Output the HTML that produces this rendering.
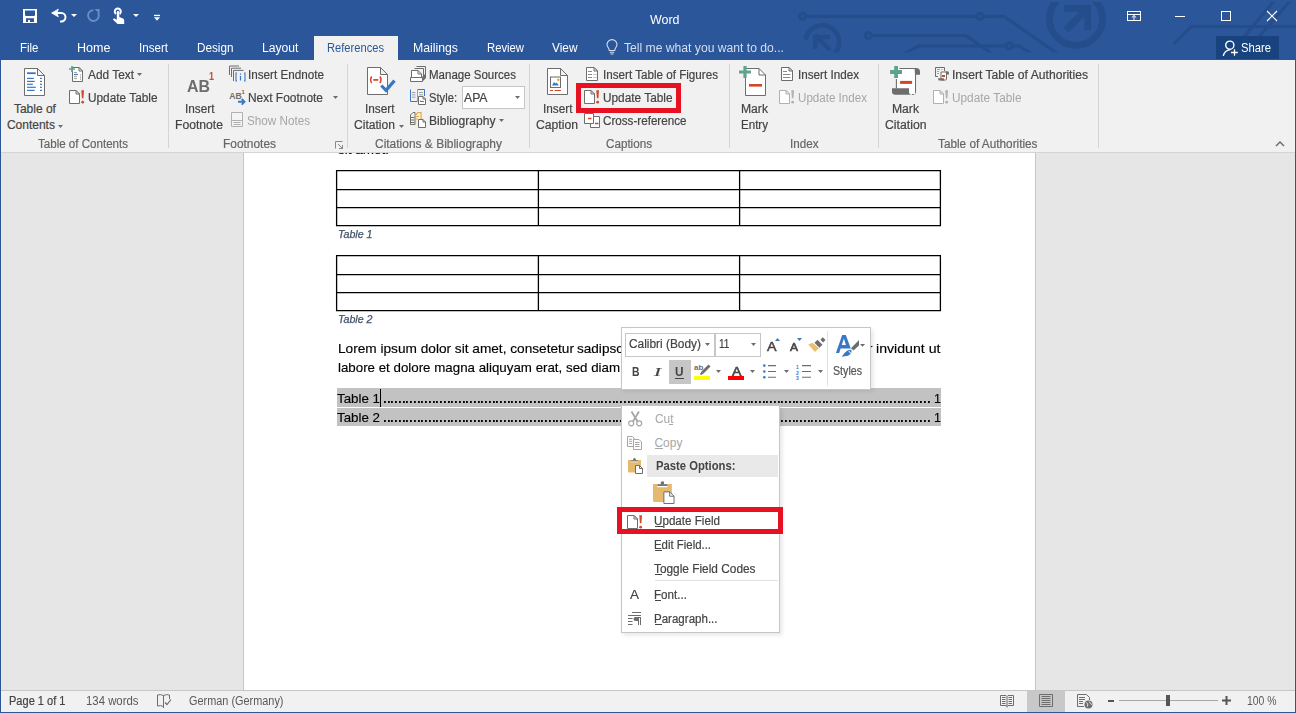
<!DOCTYPE html>
<html><head><meta charset="utf-8">
<style>
*{box-sizing:border-box;margin:0;padding:0}
html,body{width:1296px;height:713px;overflow:hidden}
body{background:#2B579A;position:relative;font-family:"Liberation Sans",sans-serif}
.t{position:absolute;white-space:pre;line-height:1;transform-origin:0 0}
svg{overflow:visible}
</style></head><body>
<svg style="position:absolute;left:0px;top:0px;clip-path:inset(2px 0 7.5px 0)" width="1296" height="60" viewBox="0 0 1296 60">
<g fill="none" stroke="#244D8C" stroke-width="3.2">
<path d="M806 16.3 H976.5 M983.7 16.3 H1004 L1058 54"/>
<circle cx="802.6" cy="16.3" r="3"/>
<circle cx="980.1" cy="16.3" r="3"/>
<path d="M872 35.6 H966 L994 55"/>
<circle cx="868.4" cy="35.6" r="3"/>
<path d="M902 55 L919 45.9 H1005.5 M1012.7 45.9 H1019 L1034 55"/>
<circle cx="1009.1" cy="45.9" r="3"/>
<path d="M1174 44 L1191 26.7 H1296"/>
<path d="M1243 38 L1274 1 M1258 38 L1290 1"/>
</g>
<path d="M805.5 39.5 A16.9 16.9 0 1 1 831 56.6" fill="none" stroke="#244D8C" stroke-width="4.8"/>
<path d="M813 37 H830 M815.2 37 V49 M815 35 L830 50" fill="none" stroke="#244D8C" stroke-width="4.4"/>
<circle cx="1076" cy="18.8" r="26.6" fill="none" stroke="#244D8C" stroke-width="6.8"/>
<path d="M1064 8.4 H1087.6 V30 M1087.6 8.4 L1066 30" fill="none" stroke="#244D8C" stroke-width="6.7"/>
</svg>
<svg style="position:absolute;left:23px;top:9px;" width="14" height="14" viewBox="0 0 14 14"><path fill="#fff" fill-rule="evenodd" d="M0 0H14V14H0Z M2 1.5H12V6.2L11.2 7H2.8L2 6.2Z M3 9.3H11V13H7V11H5V13H3Z"/></svg>
<svg style="position:absolute;left:51px;top:8px;" width="17" height="15" viewBox="0 0 17 15"><path d="M0.6 5 L7.3 1.2 L6 5 L7.3 8.8 Z" fill="#fff" stroke="#fff" stroke-width="0.8" stroke-linejoin="round"/><path d="M5 5 H10.3 A4.2 4.2 0 0 1 10.3 13.4 H9" fill="none" stroke="#fff" stroke-width="2"/></svg>
<svg style="position:absolute;left:71px;top:14px;" width="7" height="4" viewBox="0 0 7 4"><path d="M0 0H6L3 3Z" fill="#fff"/></svg>
<svg style="position:absolute;left:86px;top:8px;" width="15" height="15" viewBox="0 0 15 15"><path d="M7.4 2.1 A5.4 5.4 0 1 0 12.1 4.8" fill="none" stroke="#6A8BC3" stroke-width="1.9"/><path d="M8.6 1 H13.6 V6 Z" fill="#6A8BC3"/></svg>
<svg style="position:absolute;left:112px;top:7px;" width="14" height="18" viewBox="0 0 14 18"><path d="M3.87 6.9 A3 3 0 1 1 7.73 6.9" fill="none" stroke="#fff" stroke-width="2"/><path d="M4.8 5 Q4.8 4 6 4 Q7.3 4 7.3 5 V10.1 L11 11.5 Q12.2 12 12.2 13.5 V17 H5.5 L0.9 12.5 L2 11.3 L4.8 12.8 Z" fill="#fff"/></svg>
<svg style="position:absolute;left:133px;top:14px;" width="6" height="4" viewBox="0 0 6 4"><path d="M0 0H6L3 3Z" fill="#fff"/></svg>
<svg style="position:absolute;left:154px;top:14px;" width="6" height="8" viewBox="0 0 6 8"><rect x="0" y="0.8" width="6" height="1.3" fill="#fff"/><path d="M0 3.3H6L3 6.8Z" fill="#fff"/></svg>
<div id="t0" class="t" style="left:650.20px;top:14.00px;font-size:12px;color:#FFFFFF;font-family:'Liberation Sans',sans-serif;transform:scaleX(1.0368);">Word</div>
<svg style="position:absolute;left:1126px;top:10px;" width="16" height="12" viewBox="0 0 16 12"><rect x="1.5" y="1.5" width="13" height="9" fill="none" stroke="#fff" stroke-width="1"/><path d="M1.5 4.5H14.5" stroke="#fff"/><path d="M8 5.5V10 M5.8 7.6 L8 5.5 L10.2 7.6" stroke="#fff" fill="none"/></svg>
<div style="position:absolute;left:1175px;top:16px;width:10px;height:1px;background:#fff"></div>
<div style="position:absolute;left:1221px;top:11px;width:10px;height:10px;border:1px solid #fff"></div>
<svg style="position:absolute;left:1266px;top:10px;" width="12" height="12" viewBox="0 0 12 12"><path d="M1 1 L11 11 M11 1 L1 11" stroke="#fff" stroke-width="1.1"/></svg>
<div id="t1" class="t" style="left:20.20px;top:42.00px;font-size:12px;color:#FFFFFF;font-family:'Liberation Sans',sans-serif;transform:scaleX(0.9564);">File</div>
<div id="t2" class="t" style="left:76.70px;top:42.00px;font-size:12px;color:#FFFFFF;font-family:'Liberation Sans',sans-serif;transform:scaleX(1.0464);">Home</div>
<div id="t3" class="t" style="left:138.50px;top:42.00px;font-size:12px;color:#FFFFFF;font-family:'Liberation Sans',sans-serif;transform:scaleX(0.9662);">Insert</div>
<div id="t4" class="t" style="left:196.50px;top:42.00px;font-size:12px;color:#FFFFFF;font-family:'Liberation Sans',sans-serif;transform:scaleX(0.9770);">Design</div>
<div id="t5" class="t" style="left:261.50px;top:42.00px;font-size:12px;color:#FFFFFF;font-family:'Liberation Sans',sans-serif;transform:scaleX(1.0130);">Layout</div>
<div style="position:absolute;left:314px;top:36px;width:84px;height:24px;background:#F1F1F1"></div>
<div id="t6" class="t" style="left:326.70px;top:42.00px;font-size:12px;color:#2B579A;font-family:'Liberation Sans',sans-serif;transform:scaleX(0.9287);">References</div>
<div id="t7" class="t" style="left:412.50px;top:42.00px;font-size:12px;color:#FFFFFF;font-family:'Liberation Sans',sans-serif;transform:scaleX(1.0224);">Mailings</div>
<div id="t8" class="t" style="left:486.80px;top:42.00px;font-size:12px;color:#FFFFFF;font-family:'Liberation Sans',sans-serif;transform:scaleX(0.9401);">Review</div>
<div id="t9" class="t" style="left:552.40px;top:42.00px;font-size:12px;color:#FFFFFF;font-family:'Liberation Sans',sans-serif;transform:scaleX(0.9885);">View</div>
<svg style="position:absolute;left:606px;top:40px;" width="12" height="15" viewBox="0 0 12 15"><path d="M3.3 10.5 C3.3 8 1 7 1 4.6 A5 5 0 0 1 11 4.6 C11 7 8.7 8 8.7 10.5 Z" fill="none" stroke="#D5DEED" stroke-width="1.1"/><path d="M3.8 12.3H8.2 M4.5 14H7.5" stroke="#D5DEED" stroke-width="1.1"/></svg>
<div id="t10" class="t" style="left:624.00px;top:42.00px;font-size:12px;color:#D5DEED;font-family:'Liberation Sans',sans-serif;transform:scaleX(1.0121);">Tell me what you want to do...</div>
<div style="position:absolute;left:1216px;top:36px;width:63px;height:23px;background:#19437E"></div>
<svg style="position:absolute;left:1222px;top:41px;" width="17" height="17" viewBox="0 0 17 17"><circle cx="7.8" cy="4.2" r="4.1" fill="none" stroke="#fff" stroke-width="1.4"/><path d="M1.3 14.8 Q2.3 9.6 8.3 8.6" fill="none" stroke="#fff" stroke-width="1.4"/><path d="M12.5 8.3V14.8 M9 11.5H15.8" stroke="#fff" stroke-width="1.3"/></svg>
<div id="t11" class="t" style="left:1241.20px;top:42.00px;font-size:12px;color:#FFFFFF;font-family:'Liberation Sans',sans-serif;transform:scaleX(0.9366);">Share</div>
<div style="position:absolute;left:1px;top:60px;width:1294px;height:92px;background:#F1F1F1"></div>
<div style="position:absolute;left:1px;top:152px;width:1294px;height:1px;background:#D4D4D4"></div>
<div style="position:absolute;left:168px;top:64px;width:1px;height:84px;background:#D5D5D5"></div>
<div style="position:absolute;left:347px;top:64px;width:1px;height:84px;background:#D5D5D5"></div>
<div style="position:absolute;left:529px;top:64px;width:1px;height:84px;background:#D5D5D5"></div>
<div style="position:absolute;left:729px;top:64px;width:1px;height:84px;background:#D5D5D5"></div>
<div style="position:absolute;left:878px;top:64px;width:1px;height:84px;background:#D5D5D5"></div>
<div style="position:absolute;left:1098px;top:64px;width:1px;height:84px;background:#D5D5D5"></div>
<svg style="position:absolute;left:24px;top:68px;" width="21" height="28" viewBox="0 0 21 28"><path d="M0.5 0.5H13.5L20.5 7.5V27.5H0.5Z" fill="#fff" stroke="#6D6D6D"/><path d="M13.5 0.5V7.5H20.5Z" fill="#F1F1F1" stroke="#6D6D6D"/><rect x="3" y="4.3" width="8.7" height="1.8" fill="#3A78C3"/><rect x="3" y="9.8" width="6.8" height="1.2" fill="#3A78C3"/><rect x="16" y="9.8" width="2" height="1.2" fill="#3A78C3"/><rect x="3" y="12.8" width="7.7" height="1.2" fill="#3A78C3"/><rect x="16" y="12.8" width="2" height="1.2" fill="#3A78C3"/><rect x="3" y="15.7" width="5.9" height="1.2" fill="#3A78C3"/><rect x="16" y="15.7" width="2" height="1.2" fill="#3A78C3"/><rect x="3" y="18.7" width="8.8" height="1.2" fill="#3A78C3"/><rect x="16" y="18.7" width="2" height="1.2" fill="#3A78C3"/><rect x="3" y="21.8" width="7.7" height="1.2" fill="#3A78C3"/><rect x="16" y="21.8" width="2" height="1.2" fill="#3A78C3"/></svg>
<div id="t12" class="t" style="left:13.90px;top:103.00px;font-size:12px;color:#444444;font-family:'Liberation Sans',sans-serif;-webkit-text-stroke:0.2px #444444;">Table of</div>
<div id="t13" class="t" style="left:6.90px;top:119.00px;font-size:12px;color:#444444;font-family:'Liberation Sans',sans-serif;-webkit-text-stroke:0.2px #444444;">Contents</div>
<svg style="position:absolute;left:58px;top:125px;" width="6" height="4" viewBox="0 0 6 4"><path d="M0 0H5L2.5 3Z" fill="#6D6D6D"/></svg>
<div id="t14" class="t" style="left:38.20px;top:138.00px;font-size:12px;color:#666666;font-family:'Liberation Sans',sans-serif;-webkit-text-stroke:0.2px #666666;transform:scaleX(0.9635);">Table of Contents</div>
<svg style="position:absolute;left:69px;top:66px;" width="16" height="17" viewBox="0 0 16 17"><path d="M3.5 1.5H10L13.5 5V15.5H3.5Z" fill="#fff" stroke="#6D6D6D"/><path d="M10 1.5V5H13.5Z" fill="#F1F1F1" stroke="#6D6D6D"/><path d="M5 6.5H8 M5 10.7H8 M5 12.6H8" stroke="#A0A0A0"/><path d="M5 8.5H9" stroke="#3A78C3" stroke-width="1.2"/><path d="M11.5 8.5V9.5 M11.5 10.7V11.7 M11.5 12.6V13.6" stroke="#888"/><path d="M3 0V6 M0 3H6" stroke="#5FA38A" stroke-width="1.7"/></svg>
<div id="t15" class="t" style="left:87.50px;top:69.00px;font-size:12px;color:#444444;font-family:'Liberation Sans',sans-serif;-webkit-text-stroke:0.2px #444444;transform:scaleX(0.9896);">Add Text</div>
<svg style="position:absolute;left:137px;top:73px;" width="6" height="4" viewBox="0 0 6 4"><path d="M0 0H5L2.5 3Z" fill="#6D6D6D"/></svg>
<svg style="position:absolute;left:69px;top:90px;" width="17" height="15" viewBox="0 0 17 15"><path d="M0.5 0.5H7L10.5 4V13.5H0.5Z" fill="#fff" stroke="#6D6D6D"/><path d="M7 0.5V4H10.5Z" fill="#F1F1F1" stroke="#6D6D6D"/><path d="M12.3 0.2H15 L14.4 8.3H12.9Z" fill="#D24726"/><circle cx="13.65" cy="12.2" r="1.4" fill="#D24726"/></svg>
<div id="t16" class="t" style="left:87.80px;top:92.00px;font-size:12px;color:#444444;font-family:'Liberation Sans',sans-serif;-webkit-text-stroke:0.2px #444444;transform:scaleX(0.9858);">Update Table</div>
<div id="t17" class="t" style="left:186.50px;top:78.00px;font-size:16.5px;color:#6D6D6D;font-family:'Liberation Sans',sans-serif;font-weight:bold;transform:scaleX(0.9646);">AB</div>
<div id="t18" class="t" style="left:208.70px;top:72.00px;font-size:10px;color:#D24726;font-family:'Liberation Sans',sans-serif;font-weight:bold;transform:scaleX(0.8989);">1</div>
<div id="t19" class="t" style="left:184.60px;top:103.00px;font-size:12px;color:#444444;font-family:'Liberation Sans',sans-serif;-webkit-text-stroke:0.2px #444444;transform:scaleX(0.9828);">Insert</div>
<div id="t20" class="t" style="left:174.90px;top:119.00px;font-size:12px;color:#444444;font-family:'Liberation Sans',sans-serif;-webkit-text-stroke:0.2px #444444;transform:scaleX(1.0132);">Footnote</div>
<div id="t21" class="t" style="left:222.70px;top:138.00px;font-size:12px;color:#666666;font-family:'Liberation Sans',sans-serif;-webkit-text-stroke:0.2px #666666;transform:scaleX(0.9930);">Footnotes</div>
<svg style="position:absolute;left:335px;top:141px;" width="9" height="8" viewBox="0 0 9 8"><path d="M0.5 7.5V0.5H7.5" fill="none" stroke="#888"/><path d="M3 3L7.5 7.5 M7.5 4V7.5H4" fill="none" stroke="#888"/></svg>
<svg style="position:absolute;left:229px;top:65px;" width="18" height="18" viewBox="0 0 18 18"><path d="M0.5 10V1H10 M2.5 12V3.2H12 M4.5 16V5.4H14.5" fill="none" stroke="#6D6D6D"/><path d="M8 8H7V16H8 M15 8H16V16H15" fill="none" stroke="#3A78C3" stroke-width="1.1"/><path d="M11.5 11V15.5 M11.5 8.5V9.7" stroke="#3A78C3" stroke-width="1.2"/></svg>
<div id="t22" class="t" style="left:247.70px;top:69.00px;font-size:12px;color:#444444;font-family:'Liberation Sans',sans-serif;-webkit-text-stroke:0.2px #444444;transform:scaleX(0.9736);">Insert Endnote</div>
<svg style="position:absolute;left:229px;top:88px;" width="18" height="18" viewBox="0 0 18 18"><text x="0.3" y="10.7" font-family="Liberation Sans" font-weight="bold" font-size="8.6" fill="#6D6D6D">AB</text><text x="12.6" y="5.5" font-family="Liberation Sans" font-weight="bold" font-size="6" fill="#D24726">1</text><path d="M9 13.8H15.5 M12.7 11L15.5 13.8L12.7 16.6" fill="none" stroke="#3A78C3" stroke-width="1.9"/></svg>
<div id="t23" class="t" style="left:247.70px;top:92.00px;font-size:12px;color:#444444;font-family:'Liberation Sans',sans-serif;-webkit-text-stroke:0.2px #444444;transform:scaleX(0.9950);">Next Footnote</div>
<svg style="position:absolute;left:332.5px;top:96px;" width="6" height="4" viewBox="0 0 6 4"><path d="M0 0H5L2.5 3Z" fill="#6D6D6D"/></svg>
<svg style="position:absolute;left:231px;top:112px;" width="13" height="16" viewBox="0 0 13 16"><path d="M0.5 0.5H11.5V14.5H0.5Z" fill="#F4F4F4" stroke="#B1B1B1"/><path d="M0.5 8.5H11.5 M2.5 10.5H9.5 M2.5 12.5H9.5" stroke="#B1B1B1"/></svg>
<div id="t24" class="t" style="left:247.40px;top:115.00px;font-size:12px;color:#A6A6A6;font-family:'Liberation Sans',sans-serif;transform:scaleX(0.9737);">Show Notes</div>
<svg style="position:absolute;left:367px;top:67px;" width="21" height="28" viewBox="0 0 21 28"><path d="M0.5 0.5H13.5L20.5 7.5V27.5H0.5Z" fill="#fff" stroke="#6D6D6D"/><path d="M13.5 0.5V7.5H20.5Z" fill="#F1F1F1" stroke="#6D6D6D"/><path d="M4.7 9.5 Q2.6 12.8 4.7 16.2 M13 9.5 Q15.1 12.8 13 16.2" fill="none" stroke="#D24726" stroke-width="1.5"/><path d="M6.3 12.9H11.3" stroke="#D24726" stroke-width="1.7"/></svg>
<svg style="position:absolute;left:380px;top:79px;" width="16" height="14" viewBox="0 0 16 14"><path d="M1.3 6.5 L6 11.3 L14.5 1.6" fill="none" stroke="#3A78C3" stroke-width="3.2"/></svg>
<div id="t25" class="t" style="left:364.70px;top:103.00px;font-size:12px;color:#444444;font-family:'Liberation Sans',sans-serif;-webkit-text-stroke:0.2px #444444;transform:scaleX(0.9828);">Insert</div>
<div id="t26" class="t" style="left:353.70px;top:119.00px;font-size:12px;color:#444444;font-family:'Liberation Sans',sans-serif;-webkit-text-stroke:0.2px #444444;transform:scaleX(1.0077);">Citation</div>
<svg style="position:absolute;left:399px;top:125px;" width="6" height="4" viewBox="0 0 6 4"><path d="M0 0H5L2.5 3Z" fill="#6D6D6D"/></svg>
<div id="t27" class="t" style="left:375.00px;top:138.00px;font-size:12px;color:#666666;font-family:'Liberation Sans',sans-serif;-webkit-text-stroke:0.2px #666666;transform:scaleX(0.9968);">Citations & Bibliography</div>
<svg style="position:absolute;left:410px;top:66px;" width="17" height="17" viewBox="0 0 17 17"><path d="M6.5 0.5H15.5V9 M4.5 2.5H13.5V11" fill="none" stroke="#6D6D6D"/><path d="M1.5 4.5H8L11.5 8V11.5H1.5Z" fill="#fff" stroke="#6D6D6D"/><path d="M8 4.5V8H11.5" fill="none" stroke="#6D6D6D"/><path d="M0.5 11.5H12.5V15.5H0.5Z" fill="#fff" stroke="#6D6D6D"/><path d="M12.5 15.5 L16 12 V7 L12.5 10.5Z" fill="#6D6D6D"/></svg>
<div id="t28" class="t" style="left:428.90px;top:69.00px;font-size:12px;color:#444444;font-family:'Liberation Sans',sans-serif;-webkit-text-stroke:0.2px #444444;transform:scaleX(0.9588);">Manage Sources</div>
<svg style="position:absolute;left:410px;top:89px;" width="17" height="17" viewBox="0 0 17 17"><path d="M0.5 0.5V12.5H7.5 M7.5 0.5H14.5V7" fill="none" stroke="#3A78C3"/><path d="M7.5 0.5V12" stroke="#A0A0A0"/><path d="M2 3.5H5.5 M2 5.8H5.5 M2 8.2H5.5 M9 3.5H13 M9 5.8H13" stroke="#A0A0A0"/><path d="M8.5 7.5H13L15.5 10V15.5H8.5Z" fill="#fff" stroke="#6D6D6D"/><path d="M13 7.5V10H15.5" fill="none" stroke="#6D6D6D"/><path d="M10.3 11.5V12.5 M10.3 12.5H14" stroke="#3A78C3"/></svg>
<div id="t29" class="t" style="left:428.50px;top:92.00px;font-size:12px;color:#444444;font-family:'Liberation Sans',sans-serif;-webkit-text-stroke:0.2px #444444;transform:scaleX(0.9328);">Style:</div>
<div style="position:absolute;left:462px;top:86px;width:63px;height:23px;background:#fff;border:1px solid #C6C6C6"></div>
<div id="t30" class="t" style="left:464.20px;top:92.00px;font-size:12px;color:#444444;font-family:'Liberation Sans',sans-serif;-webkit-text-stroke:0.2px #444444;transform:scaleX(1.0162);">APA</div>
<svg style="position:absolute;left:515px;top:96px;" width="6" height="4" viewBox="0 0 6 4"><path d="M0 0H5L2.5 3Z" fill="#6D6D6D"/></svg>
<svg style="position:absolute;left:410px;top:111px;" width="17" height="17" viewBox="0 0 17 17"><path d="M0.5 4 L3 1.5 H5 V13.5 H0.5Z" fill="#F1F1F1" stroke="#6D6D6D"/><path d="M1 6.5H4.5 M1 9H4.5 M1 11.5H4.5" stroke="#6D6D6D"/><path d="M5.5 4 L8 1.5 H11 V8" fill="none" stroke="#E5A844" stroke-width="1.2"/><path d="M6 5.5H9 M6 8H8" stroke="#E5A844" stroke-width="1.2"/><path d="M5.5 4V13.5" stroke="#E5A844" stroke-width="1.2"/><path d="M8.5 8.5H13L15.5 11V16.5H8.5Z" fill="#fff" stroke="#6D6D6D"/><path d="M13 8.5V11H15.5" fill="none" stroke="#6D6D6D"/></svg>
<div id="t31" class="t" style="left:428.90px;top:115.00px;font-size:12px;color:#444444;font-family:'Liberation Sans',sans-serif;-webkit-text-stroke:0.2px #444444;transform:scaleX(1.0069);">Bibliography</div>
<svg style="position:absolute;left:499px;top:119px;" width="6" height="4" viewBox="0 0 6 4"><path d="M0 0H5L2.5 3Z" fill="#6D6D6D"/></svg>
<svg style="position:absolute;left:547px;top:68px;" width="21" height="28" viewBox="0 0 21 28"><path d="M0.5 0.5H13.5L20.5 7.5V26.5H0.5Z" fill="#fff" stroke="#6D6D6D"/><path d="M13.5 0.5V7.5H20.5Z" fill="#F1F1F1" stroke="#6D6D6D"/><rect x="3.5" y="9" width="10" height="10.5" fill="#fff" stroke="#6D6D6D"/><path d="M5 17.5 L7 14 L8.5 15.5 L9.5 14.5 L12 17.5Z" fill="#3A78C3"/><circle cx="11.3" cy="11.8" r="1.3" fill="#E5A844"/><path d="M3 22.5H6 M7.5 22.5H14" stroke="#D24726" stroke-width="1.1"/></svg>
<div id="t32" class="t" style="left:542.50px;top:103.00px;font-size:12px;color:#444444;font-family:'Liberation Sans',sans-serif;-webkit-text-stroke:0.2px #444444;transform:scaleX(0.9828);">Insert</div>
<div id="t33" class="t" style="left:535.50px;top:119.00px;font-size:12px;color:#444444;font-family:'Liberation Sans',sans-serif;-webkit-text-stroke:0.2px #444444;transform:scaleX(1.0151);">Caption</div>
<div id="t34" class="t" style="left:605.70px;top:138.00px;font-size:12px;color:#666666;font-family:'Liberation Sans',sans-serif;-webkit-text-stroke:0.2px #666666;transform:scaleX(0.9710);">Captions</div>
<svg style="position:absolute;left:586px;top:67px;" width="13" height="15" viewBox="0 0 13 15"><path d="M0.5 0.5H8L11.5 4V13.5H0.5Z" fill="#fff" stroke="#6D6D6D"/><path d="M8 0.5V4H11.5Z" fill="#F1F1F1" stroke="#6D6D6D"/><path d="M2 4.5H6 M2 7.5H6 M2 10.5H6 M7.5 7.5H8.5 M9.5 7.5H10.5 M7.5 10.5H8.5 M9.5 10.5H10.5" stroke="#8A8A8A"/></svg>
<div id="t35" class="t" style="left:602.80px;top:69.00px;font-size:12px;color:#444444;font-family:'Liberation Sans',sans-serif;-webkit-text-stroke:0.2px #444444;transform:scaleX(0.9703);">Insert Table of Figures</div>
<div style="position:absolute;left:576px;top:83px;width:105px;height:30px;border:5px solid #E81123"></div>
<svg style="position:absolute;left:584px;top:90px;" width="17" height="15" viewBox="0 0 17 15"><path d="M0.5 0.5H7L10.5 4V13.5H0.5Z" fill="#fff" stroke="#6D6D6D"/><path d="M7 0.5V4H10.5Z" fill="#F1F1F1" stroke="#6D6D6D"/><path d="M12.3 0.2H15 L14.4 8.3H12.9Z" fill="#D24726"/><circle cx="13.65" cy="12.2" r="1.4" fill="#D24726"/></svg>
<div id="t36" class="t" style="left:602.80px;top:92.00px;font-size:12px;color:#444444;font-family:'Liberation Sans',sans-serif;-webkit-text-stroke:0.2px #444444;transform:scaleX(0.9858);">Update Table</div>
<svg style="position:absolute;left:584px;top:113px;" width="17" height="16" viewBox="0 0 17 16"><path d="M6.5 3.5H15.5V14.5H6.5Z" fill="#fff" stroke="#6D6D6D"/><path d="M0.5 0.5H9.5V10.5H0.5Z" fill="#fff" stroke="#6D6D6D"/><path d="M4 5.5H7.5 M11 10.5H14.5" stroke="#D24726" stroke-width="1.7"/></svg>
<div id="t37" class="t" style="left:602.80px;top:115.00px;font-size:12px;color:#444444;font-family:'Liberation Sans',sans-serif;-webkit-text-stroke:0.2px #444444;transform:scaleX(0.9706);">Cross-reference</div>
<svg style="position:absolute;left:739px;top:66px;" width="28" height="31" viewBox="0 0 28 31"><path d="M6.5 2.5H20L26.5 9V29.5H6.5Z" fill="#fff" stroke="#6D6D6D"/><path d="M20 2.5V9H26.5" fill="none" stroke="#6D6D6D"/><rect x="10" y="18" width="13" height="2.6" fill="#D24726"/><path d="M6 0V12 M0 6H12" stroke="#5FA38A" stroke-width="3.2"/></svg>
<div id="t38" class="t" style="left:740.90px;top:103.00px;font-size:12px;color:#444444;font-family:'Liberation Sans',sans-serif;-webkit-text-stroke:0.2px #444444;transform:scaleX(1.0123);">Mark</div>
<div id="t39" class="t" style="left:740.90px;top:119.00px;font-size:12px;color:#444444;font-family:'Liberation Sans',sans-serif;-webkit-text-stroke:0.2px #444444;transform:scaleX(0.9637);">Entry</div>
<div id="t40" class="t" style="left:789.50px;top:138.00px;font-size:12px;color:#666666;font-family:'Liberation Sans',sans-serif;-webkit-text-stroke:0.2px #666666;transform:scaleX(0.9707);">Index</div>
<svg style="position:absolute;left:781px;top:67px;" width="13" height="15" viewBox="0 0 13 15"><path d="M0.5 0.5H8L11.5 4V13.5H0.5Z" fill="#fff" stroke="#6D6D6D"/><path d="M8 0.5V4H11.5Z" fill="#F1F1F1" stroke="#6D6D6D"/><path d="M2 4.5H6 M2 7.5H9.5 M2 10.5H9.5" stroke="#8A8A8A"/></svg>
<div id="t41" class="t" style="left:797.50px;top:69.00px;font-size:12px;color:#444444;font-family:'Liberation Sans',sans-serif;-webkit-text-stroke:0.2px #444444;transform:scaleX(0.9728);">Insert Index</div>
<svg style="position:absolute;left:779px;top:90px;" width="17" height="15" viewBox="0 0 17 15"><path d="M0.5 0.5H7L10.5 4V13.5H0.5Z" fill="#fff" stroke="#B1B1B1"/><path d="M7 0.5V4H10.5Z" fill="#F1F1F1" stroke="#B1B1B1"/><path d="M12.3 0.2H15 L14.4 8.3H12.9Z" fill="#B1B1B1"/><circle cx="13.65" cy="12.2" r="1.4" fill="#B1B1B1"/></svg>
<div id="t42" class="t" style="left:797.80px;top:92.00px;font-size:12px;color:#A6A6A6;font-family:'Liberation Sans',sans-serif;transform:scaleX(0.9665);">Update Index</div>
<svg style="position:absolute;left:889px;top:66px;" width="33" height="30" viewBox="0 0 33 30"><path d="M10.3 2.5 H26.5 V25.2 Q26.5 28.4 23 28.4" fill="#fff" stroke="#6D6D6D" stroke-width="1.1"/><path d="M10.3 3 H26 V28 H7.4 V13.3 Z" fill="#fff"/><path d="M7.4 13 V22.5" stroke="#6D6D6D" stroke-width="1.1"/><path d="M25.5 2 H27 Q31 2 31 6 V8.7 H26 Z" fill="#6D6D6D"/><path d="M3 22.2 H20 V25.5 Q20 28.8 23 28.8 H6.5 Q3 28.8 3 25.5 Z" fill="#6D6D6D"/><rect x="11.1" y="14.9" width="12" height="3" fill="#D24726"/><path d="M7.1 0V12 M1.1 6H13" stroke="#5FA38A" stroke-width="3.8"/></svg>
<div id="t43" class="t" style="left:892.40px;top:103.00px;font-size:12px;color:#444444;font-family:'Liberation Sans',sans-serif;-webkit-text-stroke:0.2px #444444;transform:scaleX(1.0123);">Mark</div>
<div id="t44" class="t" style="left:884.60px;top:119.00px;font-size:12px;color:#444444;font-family:'Liberation Sans',sans-serif;-webkit-text-stroke:0.2px #444444;transform:scaleX(1.0200);">Citation</div>
<div id="t45" class="t" style="left:937.60px;top:138.00px;font-size:12px;color:#666666;font-family:'Liberation Sans',sans-serif;-webkit-text-stroke:0.2px #666666;transform:scaleX(0.9812);">Table of Authorities</div>
<svg style="position:absolute;left:935px;top:67px;" width="15" height="15" viewBox="0 0 15 15"><path d="M3 9.5 H0.5 V0.5 H9.5 V4" fill="none" stroke="#6D6D6D"/><path d="M2 2.5H5 M2 4.5H4 M2 6.5H4 M6.5 2.5H7.5" stroke="#A0A0A0"/><path d="M6 5 H11.5 V12 Q11.5 13 10.5 13 H6 Z" fill="#fff" stroke="#6D6D6D"/><path d="M10.5 4.3 H12.5 Q14 4.3 14 6 V7.5 H11.5 Z" fill="#6D6D6D"/><path d="M3.2 11.2 H9 V13.6 H4.2 Q3.2 13.6 3.2 12.5 Z" fill="#6D6D6D"/><rect x="7" y="8" width="3" height="2" fill="#D24726"/></svg>
<div id="t46" class="t" style="left:951.50px;top:69.00px;font-size:12px;color:#444444;font-family:'Liberation Sans',sans-serif;-webkit-text-stroke:0.2px #444444;transform:scaleX(1.0109);">Insert Table of Authorities</div>
<svg style="position:absolute;left:933px;top:90px;" width="17" height="15" viewBox="0 0 17 15"><path d="M0.5 0.5H7L10.5 4V13.5H0.5Z" fill="#fff" stroke="#B1B1B1"/><path d="M7 0.5V4H10.5Z" fill="#F1F1F1" stroke="#B1B1B1"/><path d="M12.3 0.2H15 L14.4 8.3H12.9Z" fill="#B1B1B1"/><circle cx="13.65" cy="12.2" r="1.4" fill="#B1B1B1"/></svg>
<div id="t47" class="t" style="left:952.00px;top:92.00px;font-size:12px;color:#A6A6A6;font-family:'Liberation Sans',sans-serif;transform:scaleX(0.9858);">Update Table</div>
<svg style="position:absolute;left:1275px;top:140px;" width="10" height="7" viewBox="0 0 10 7"><path d="M1 6L5 2L9 6" fill="none" stroke="#666" stroke-width="1.4"/></svg>
<div style="position:absolute;left:1px;top:153px;width:1294px;height:537px;background:#E6E6E6"></div>
<div style="position:absolute;left:243px;top:153px;width:793px;height:537px;background:#fff;border-left:1px solid #C6C6C6;border-right:1px solid #C6C6C6"></div>
<div style="position:absolute;left:244px;top:153px;width:791px;height:537px;overflow:hidden">
<div id="t48" class="t" style="left:93.50px;top:-9.00px;font-size:12.8px;color:#000000;font-family:'Liberation Sans',sans-serif;-webkit-text-stroke:0.15px #000;transform:scaleX(1.0546);">sit amet.</div>
<svg style="position:absolute;left:92px;top:17px;" width="606" height="57" viewBox="0 0 606 57"><path d="M0 0.6 H605" stroke="#000" stroke-width="1.3"/><path d="M0 19.6 H605" stroke="#000" stroke-width="1.3"/><path d="M0 37.6 H605" stroke="#000" stroke-width="1.3"/><path d="M0 55.6 H605" stroke="#000" stroke-width="1.3"/><path d="M0.6 0 V56" stroke="#000" stroke-width="1.3"/><path d="M202.4 0 V56" stroke="#000" stroke-width="1.3"/><path d="M403.6 0 V56" stroke="#000" stroke-width="1.3"/><path d="M604.4 0 V56" stroke="#000" stroke-width="1.3"/></svg>
<div id="t49" class="t" style="left:93.70px;top:77.00px;font-size:10px;color:#44546A;font-family:'Liberation Sans',sans-serif;font-style:italic;-webkit-text-stroke:0.25px #44546A;transform:scaleX(1.0636);">Table 1</div>
<svg style="position:absolute;left:92px;top:102px;" width="606" height="57" viewBox="0 0 606 57"><path d="M0 0.6 H605" stroke="#000" stroke-width="1.3"/><path d="M0 19.6 H605" stroke="#000" stroke-width="1.3"/><path d="M0 37.6 H605" stroke="#000" stroke-width="1.3"/><path d="M0 55.6 H605" stroke="#000" stroke-width="1.3"/><path d="M0.6 0 V56" stroke="#000" stroke-width="1.3"/><path d="M202.4 0 V56" stroke="#000" stroke-width="1.3"/><path d="M403.6 0 V56" stroke="#000" stroke-width="1.3"/><path d="M604.4 0 V56" stroke="#000" stroke-width="1.3"/></svg>
<div id="t50" class="t" style="left:93.70px;top:162.00px;font-size:10px;color:#44546A;font-family:'Liberation Sans',sans-serif;font-style:italic;-webkit-text-stroke:0.25px #44546A;transform:scaleX(1.0636);">Table 2</div>
<div id="t51" class="t" style="left:94.00px;top:190.00px;font-size:12.8px;color:#000000;font-family:'Liberation Sans',sans-serif;-webkit-text-stroke:0.15px #000;transform:scaleX(1.0669);">Lorem ipsum dolor sit amet, consetetur</div>
<div id="t52" class="t" style="left:332.50px;top:190.00px;font-size:12.8px;color:#000000;font-family:'Liberation Sans',sans-serif;-webkit-text-stroke:0.15px #000;transform:scaleX(1.0600);">sadipscing elitr, sed diam nonumy</div>
<div id="t53" class="t" style="left:623.60px;top:190.00px;font-size:12.8px;color:#000000;font-family:'Liberation Sans',sans-serif;-webkit-text-stroke:0.15px #000;transform:scaleX(1.0549);">r</div>
<div id="t54" class="t" style="left:632.30px;top:190.00px;font-size:12.8px;color:#000000;font-family:'Liberation Sans',sans-serif;-webkit-text-stroke:0.15px #000;transform:scaleX(1.1055);">invidunt ut</div>
<div id="t55" class="t" style="left:94.00px;top:209.00px;font-size:12.8px;color:#000000;font-family:'Liberation Sans',sans-serif;-webkit-text-stroke:0.15px #000;transform:scaleX(1.0405);">labore et dolore magna aliquyam erat, sed diam</div>
<div style="position:absolute;left:93px;top:235px;width:604px;height:19px;background:#C2C2C2"></div>
<div style="position:absolute;left:93px;top:255px;width:604px;height:18px;background:#C2C2C2"></div>
<div id="t56" class="t" style="left:93.30px;top:240.00px;font-size:12.8px;color:#000000;font-family:'Liberation Sans',sans-serif;-webkit-text-stroke:0.15px #000;transform:scaleX(1.0420);">Table 1</div>
<div id="t57" class="t" style="left:93.30px;top:259.00px;font-size:12.8px;color:#000000;font-family:'Liberation Sans',sans-serif;-webkit-text-stroke:0.15px #000;transform:scaleX(1.0420);">Table 2</div>
<div style="position:absolute;left:136px;top:236px;width:1px;height:18px;background:#000"></div>
<svg style="position:absolute;left:0px;top:248px;" width="791" height="2" viewBox="0 0 791 2"><rect x="140" y="0" width="1.8" height="2" fill="#000"/><rect x="144" y="0" width="1.8" height="2" fill="#000"/><rect x="147" y="0" width="1.8" height="2" fill="#000"/><rect x="151" y="0" width="1.8" height="2" fill="#000"/><rect x="155" y="0" width="1.8" height="2" fill="#000"/><rect x="159" y="0" width="1.8" height="2" fill="#000"/><rect x="162" y="0" width="1.8" height="2" fill="#000"/><rect x="166" y="0" width="1.8" height="2" fill="#000"/><rect x="170" y="0" width="1.8" height="2" fill="#000"/><rect x="174" y="0" width="1.8" height="2" fill="#000"/><rect x="177" y="0" width="1.8" height="2" fill="#000"/><rect x="181" y="0" width="1.8" height="2" fill="#000"/><rect x="185" y="0" width="1.8" height="2" fill="#000"/><rect x="189" y="0" width="1.8" height="2" fill="#000"/><rect x="192" y="0" width="1.8" height="2" fill="#000"/><rect x="196" y="0" width="1.8" height="2" fill="#000"/><rect x="200" y="0" width="1.8" height="2" fill="#000"/><rect x="204" y="0" width="1.8" height="2" fill="#000"/><rect x="207" y="0" width="1.8" height="2" fill="#000"/><rect x="211" y="0" width="1.8" height="2" fill="#000"/><rect x="215" y="0" width="1.8" height="2" fill="#000"/><rect x="219" y="0" width="1.8" height="2" fill="#000"/><rect x="222" y="0" width="1.8" height="2" fill="#000"/><rect x="226" y="0" width="1.8" height="2" fill="#000"/><rect x="230" y="0" width="1.8" height="2" fill="#000"/><rect x="234" y="0" width="1.8" height="2" fill="#000"/><rect x="237" y="0" width="1.8" height="2" fill="#000"/><rect x="241" y="0" width="1.8" height="2" fill="#000"/><rect x="245" y="0" width="1.8" height="2" fill="#000"/><rect x="249" y="0" width="1.8" height="2" fill="#000"/><rect x="252" y="0" width="1.8" height="2" fill="#000"/><rect x="256" y="0" width="1.8" height="2" fill="#000"/><rect x="260" y="0" width="1.8" height="2" fill="#000"/><rect x="264" y="0" width="1.8" height="2" fill="#000"/><rect x="267" y="0" width="1.8" height="2" fill="#000"/><rect x="271" y="0" width="1.8" height="2" fill="#000"/><rect x="275" y="0" width="1.8" height="2" fill="#000"/><rect x="279" y="0" width="1.8" height="2" fill="#000"/><rect x="282" y="0" width="1.8" height="2" fill="#000"/><rect x="286" y="0" width="1.8" height="2" fill="#000"/><rect x="290" y="0" width="1.8" height="2" fill="#000"/><rect x="294" y="0" width="1.8" height="2" fill="#000"/><rect x="297" y="0" width="1.8" height="2" fill="#000"/><rect x="301" y="0" width="1.8" height="2" fill="#000"/><rect x="305" y="0" width="1.8" height="2" fill="#000"/><rect x="309" y="0" width="1.8" height="2" fill="#000"/><rect x="312" y="0" width="1.8" height="2" fill="#000"/><rect x="316" y="0" width="1.8" height="2" fill="#000"/><rect x="320" y="0" width="1.8" height="2" fill="#000"/><rect x="324" y="0" width="1.8" height="2" fill="#000"/><rect x="327" y="0" width="1.8" height="2" fill="#000"/><rect x="331" y="0" width="1.8" height="2" fill="#000"/><rect x="335" y="0" width="1.8" height="2" fill="#000"/><rect x="339" y="0" width="1.8" height="2" fill="#000"/><rect x="342" y="0" width="1.8" height="2" fill="#000"/><rect x="346" y="0" width="1.8" height="2" fill="#000"/><rect x="350" y="0" width="1.8" height="2" fill="#000"/><rect x="354" y="0" width="1.8" height="2" fill="#000"/><rect x="357" y="0" width="1.8" height="2" fill="#000"/><rect x="361" y="0" width="1.8" height="2" fill="#000"/><rect x="365" y="0" width="1.8" height="2" fill="#000"/><rect x="369" y="0" width="1.8" height="2" fill="#000"/><rect x="372" y="0" width="1.8" height="2" fill="#000"/><rect x="376" y="0" width="1.8" height="2" fill="#000"/><rect x="380" y="0" width="1.8" height="2" fill="#000"/><rect x="384" y="0" width="1.8" height="2" fill="#000"/><rect x="387" y="0" width="1.8" height="2" fill="#000"/><rect x="391" y="0" width="1.8" height="2" fill="#000"/><rect x="395" y="0" width="1.8" height="2" fill="#000"/><rect x="399" y="0" width="1.8" height="2" fill="#000"/><rect x="402" y="0" width="1.8" height="2" fill="#000"/><rect x="406" y="0" width="1.8" height="2" fill="#000"/><rect x="410" y="0" width="1.8" height="2" fill="#000"/><rect x="414" y="0" width="1.8" height="2" fill="#000"/><rect x="417" y="0" width="1.8" height="2" fill="#000"/><rect x="421" y="0" width="1.8" height="2" fill="#000"/><rect x="425" y="0" width="1.8" height="2" fill="#000"/><rect x="429" y="0" width="1.8" height="2" fill="#000"/><rect x="432" y="0" width="1.8" height="2" fill="#000"/><rect x="436" y="0" width="1.8" height="2" fill="#000"/><rect x="440" y="0" width="1.8" height="2" fill="#000"/><rect x="444" y="0" width="1.8" height="2" fill="#000"/><rect x="447" y="0" width="1.8" height="2" fill="#000"/><rect x="451" y="0" width="1.8" height="2" fill="#000"/><rect x="455" y="0" width="1.8" height="2" fill="#000"/><rect x="459" y="0" width="1.8" height="2" fill="#000"/><rect x="462" y="0" width="1.8" height="2" fill="#000"/><rect x="466" y="0" width="1.8" height="2" fill="#000"/><rect x="470" y="0" width="1.8" height="2" fill="#000"/><rect x="474" y="0" width="1.8" height="2" fill="#000"/><rect x="477" y="0" width="1.8" height="2" fill="#000"/><rect x="481" y="0" width="1.8" height="2" fill="#000"/><rect x="485" y="0" width="1.8" height="2" fill="#000"/><rect x="489" y="0" width="1.8" height="2" fill="#000"/><rect x="492" y="0" width="1.8" height="2" fill="#000"/><rect x="496" y="0" width="1.8" height="2" fill="#000"/><rect x="500" y="0" width="1.8" height="2" fill="#000"/><rect x="504" y="0" width="1.8" height="2" fill="#000"/><rect x="507" y="0" width="1.8" height="2" fill="#000"/><rect x="511" y="0" width="1.8" height="2" fill="#000"/><rect x="515" y="0" width="1.8" height="2" fill="#000"/><rect x="519" y="0" width="1.8" height="2" fill="#000"/><rect x="522" y="0" width="1.8" height="2" fill="#000"/><rect x="526" y="0" width="1.8" height="2" fill="#000"/><rect x="530" y="0" width="1.8" height="2" fill="#000"/><rect x="534" y="0" width="1.8" height="2" fill="#000"/><rect x="537" y="0" width="1.8" height="2" fill="#000"/><rect x="541" y="0" width="1.8" height="2" fill="#000"/><rect x="545" y="0" width="1.8" height="2" fill="#000"/><rect x="549" y="0" width="1.8" height="2" fill="#000"/><rect x="552" y="0" width="1.8" height="2" fill="#000"/><rect x="556" y="0" width="1.8" height="2" fill="#000"/><rect x="560" y="0" width="1.8" height="2" fill="#000"/><rect x="564" y="0" width="1.8" height="2" fill="#000"/><rect x="567" y="0" width="1.8" height="2" fill="#000"/><rect x="571" y="0" width="1.8" height="2" fill="#000"/><rect x="575" y="0" width="1.8" height="2" fill="#000"/><rect x="579" y="0" width="1.8" height="2" fill="#000"/><rect x="582" y="0" width="1.8" height="2" fill="#000"/><rect x="586" y="0" width="1.8" height="2" fill="#000"/><rect x="590" y="0" width="1.8" height="2" fill="#000"/><rect x="594" y="0" width="1.8" height="2" fill="#000"/><rect x="597" y="0" width="1.8" height="2" fill="#000"/><rect x="601" y="0" width="1.8" height="2" fill="#000"/><rect x="605" y="0" width="1.8" height="2" fill="#000"/><rect x="609" y="0" width="1.8" height="2" fill="#000"/><rect x="612" y="0" width="1.8" height="2" fill="#000"/><rect x="616" y="0" width="1.8" height="2" fill="#000"/><rect x="620" y="0" width="1.8" height="2" fill="#000"/><rect x="624" y="0" width="1.8" height="2" fill="#000"/><rect x="627" y="0" width="1.8" height="2" fill="#000"/><rect x="631" y="0" width="1.8" height="2" fill="#000"/><rect x="635" y="0" width="1.8" height="2" fill="#000"/><rect x="639" y="0" width="1.8" height="2" fill="#000"/><rect x="642" y="0" width="1.8" height="2" fill="#000"/><rect x="646" y="0" width="1.8" height="2" fill="#000"/><rect x="650" y="0" width="1.8" height="2" fill="#000"/><rect x="654" y="0" width="1.8" height="2" fill="#000"/><rect x="657" y="0" width="1.8" height="2" fill="#000"/><rect x="661" y="0" width="1.8" height="2" fill="#000"/><rect x="665" y="0" width="1.8" height="2" fill="#000"/><rect x="669" y="0" width="1.8" height="2" fill="#000"/><rect x="672" y="0" width="1.8" height="2" fill="#000"/><rect x="676" y="0" width="1.8" height="2" fill="#000"/><rect x="680" y="0" width="1.8" height="2" fill="#000"/><rect x="684" y="0" width="1.8" height="2" fill="#000"/></svg>
<div id="t58" class="t" style="left:690.00px;top:240.00px;font-size:12.8px;color:#000000;font-family:'Liberation Sans',sans-serif;-webkit-text-stroke:0.15px #000;transform:scaleX(0.9825);">1</div>
<svg style="position:absolute;left:0px;top:267px;" width="791" height="2" viewBox="0 0 791 2"><rect x="140" y="0" width="1.8" height="2" fill="#000"/><rect x="144" y="0" width="1.8" height="2" fill="#000"/><rect x="147" y="0" width="1.8" height="2" fill="#000"/><rect x="151" y="0" width="1.8" height="2" fill="#000"/><rect x="155" y="0" width="1.8" height="2" fill="#000"/><rect x="159" y="0" width="1.8" height="2" fill="#000"/><rect x="162" y="0" width="1.8" height="2" fill="#000"/><rect x="166" y="0" width="1.8" height="2" fill="#000"/><rect x="170" y="0" width="1.8" height="2" fill="#000"/><rect x="174" y="0" width="1.8" height="2" fill="#000"/><rect x="177" y="0" width="1.8" height="2" fill="#000"/><rect x="181" y="0" width="1.8" height="2" fill="#000"/><rect x="185" y="0" width="1.8" height="2" fill="#000"/><rect x="189" y="0" width="1.8" height="2" fill="#000"/><rect x="192" y="0" width="1.8" height="2" fill="#000"/><rect x="196" y="0" width="1.8" height="2" fill="#000"/><rect x="200" y="0" width="1.8" height="2" fill="#000"/><rect x="204" y="0" width="1.8" height="2" fill="#000"/><rect x="207" y="0" width="1.8" height="2" fill="#000"/><rect x="211" y="0" width="1.8" height="2" fill="#000"/><rect x="215" y="0" width="1.8" height="2" fill="#000"/><rect x="219" y="0" width="1.8" height="2" fill="#000"/><rect x="222" y="0" width="1.8" height="2" fill="#000"/><rect x="226" y="0" width="1.8" height="2" fill="#000"/><rect x="230" y="0" width="1.8" height="2" fill="#000"/><rect x="234" y="0" width="1.8" height="2" fill="#000"/><rect x="237" y="0" width="1.8" height="2" fill="#000"/><rect x="241" y="0" width="1.8" height="2" fill="#000"/><rect x="245" y="0" width="1.8" height="2" fill="#000"/><rect x="249" y="0" width="1.8" height="2" fill="#000"/><rect x="252" y="0" width="1.8" height="2" fill="#000"/><rect x="256" y="0" width="1.8" height="2" fill="#000"/><rect x="260" y="0" width="1.8" height="2" fill="#000"/><rect x="264" y="0" width="1.8" height="2" fill="#000"/><rect x="267" y="0" width="1.8" height="2" fill="#000"/><rect x="271" y="0" width="1.8" height="2" fill="#000"/><rect x="275" y="0" width="1.8" height="2" fill="#000"/><rect x="279" y="0" width="1.8" height="2" fill="#000"/><rect x="282" y="0" width="1.8" height="2" fill="#000"/><rect x="286" y="0" width="1.8" height="2" fill="#000"/><rect x="290" y="0" width="1.8" height="2" fill="#000"/><rect x="294" y="0" width="1.8" height="2" fill="#000"/><rect x="297" y="0" width="1.8" height="2" fill="#000"/><rect x="301" y="0" width="1.8" height="2" fill="#000"/><rect x="305" y="0" width="1.8" height="2" fill="#000"/><rect x="309" y="0" width="1.8" height="2" fill="#000"/><rect x="312" y="0" width="1.8" height="2" fill="#000"/><rect x="316" y="0" width="1.8" height="2" fill="#000"/><rect x="320" y="0" width="1.8" height="2" fill="#000"/><rect x="324" y="0" width="1.8" height="2" fill="#000"/><rect x="327" y="0" width="1.8" height="2" fill="#000"/><rect x="331" y="0" width="1.8" height="2" fill="#000"/><rect x="335" y="0" width="1.8" height="2" fill="#000"/><rect x="339" y="0" width="1.8" height="2" fill="#000"/><rect x="342" y="0" width="1.8" height="2" fill="#000"/><rect x="346" y="0" width="1.8" height="2" fill="#000"/><rect x="350" y="0" width="1.8" height="2" fill="#000"/><rect x="354" y="0" width="1.8" height="2" fill="#000"/><rect x="357" y="0" width="1.8" height="2" fill="#000"/><rect x="361" y="0" width="1.8" height="2" fill="#000"/><rect x="365" y="0" width="1.8" height="2" fill="#000"/><rect x="369" y="0" width="1.8" height="2" fill="#000"/><rect x="372" y="0" width="1.8" height="2" fill="#000"/><rect x="376" y="0" width="1.8" height="2" fill="#000"/><rect x="380" y="0" width="1.8" height="2" fill="#000"/><rect x="384" y="0" width="1.8" height="2" fill="#000"/><rect x="387" y="0" width="1.8" height="2" fill="#000"/><rect x="391" y="0" width="1.8" height="2" fill="#000"/><rect x="395" y="0" width="1.8" height="2" fill="#000"/><rect x="399" y="0" width="1.8" height="2" fill="#000"/><rect x="402" y="0" width="1.8" height="2" fill="#000"/><rect x="406" y="0" width="1.8" height="2" fill="#000"/><rect x="410" y="0" width="1.8" height="2" fill="#000"/><rect x="414" y="0" width="1.8" height="2" fill="#000"/><rect x="417" y="0" width="1.8" height="2" fill="#000"/><rect x="421" y="0" width="1.8" height="2" fill="#000"/><rect x="425" y="0" width="1.8" height="2" fill="#000"/><rect x="429" y="0" width="1.8" height="2" fill="#000"/><rect x="432" y="0" width="1.8" height="2" fill="#000"/><rect x="436" y="0" width="1.8" height="2" fill="#000"/><rect x="440" y="0" width="1.8" height="2" fill="#000"/><rect x="444" y="0" width="1.8" height="2" fill="#000"/><rect x="447" y="0" width="1.8" height="2" fill="#000"/><rect x="451" y="0" width="1.8" height="2" fill="#000"/><rect x="455" y="0" width="1.8" height="2" fill="#000"/><rect x="459" y="0" width="1.8" height="2" fill="#000"/><rect x="462" y="0" width="1.8" height="2" fill="#000"/><rect x="466" y="0" width="1.8" height="2" fill="#000"/><rect x="470" y="0" width="1.8" height="2" fill="#000"/><rect x="474" y="0" width="1.8" height="2" fill="#000"/><rect x="477" y="0" width="1.8" height="2" fill="#000"/><rect x="481" y="0" width="1.8" height="2" fill="#000"/><rect x="485" y="0" width="1.8" height="2" fill="#000"/><rect x="489" y="0" width="1.8" height="2" fill="#000"/><rect x="492" y="0" width="1.8" height="2" fill="#000"/><rect x="496" y="0" width="1.8" height="2" fill="#000"/><rect x="500" y="0" width="1.8" height="2" fill="#000"/><rect x="504" y="0" width="1.8" height="2" fill="#000"/><rect x="507" y="0" width="1.8" height="2" fill="#000"/><rect x="511" y="0" width="1.8" height="2" fill="#000"/><rect x="515" y="0" width="1.8" height="2" fill="#000"/><rect x="519" y="0" width="1.8" height="2" fill="#000"/><rect x="522" y="0" width="1.8" height="2" fill="#000"/><rect x="526" y="0" width="1.8" height="2" fill="#000"/><rect x="530" y="0" width="1.8" height="2" fill="#000"/><rect x="534" y="0" width="1.8" height="2" fill="#000"/><rect x="537" y="0" width="1.8" height="2" fill="#000"/><rect x="541" y="0" width="1.8" height="2" fill="#000"/><rect x="545" y="0" width="1.8" height="2" fill="#000"/><rect x="549" y="0" width="1.8" height="2" fill="#000"/><rect x="552" y="0" width="1.8" height="2" fill="#000"/><rect x="556" y="0" width="1.8" height="2" fill="#000"/><rect x="560" y="0" width="1.8" height="2" fill="#000"/><rect x="564" y="0" width="1.8" height="2" fill="#000"/><rect x="567" y="0" width="1.8" height="2" fill="#000"/><rect x="571" y="0" width="1.8" height="2" fill="#000"/><rect x="575" y="0" width="1.8" height="2" fill="#000"/><rect x="579" y="0" width="1.8" height="2" fill="#000"/><rect x="582" y="0" width="1.8" height="2" fill="#000"/><rect x="586" y="0" width="1.8" height="2" fill="#000"/><rect x="590" y="0" width="1.8" height="2" fill="#000"/><rect x="594" y="0" width="1.8" height="2" fill="#000"/><rect x="597" y="0" width="1.8" height="2" fill="#000"/><rect x="601" y="0" width="1.8" height="2" fill="#000"/><rect x="605" y="0" width="1.8" height="2" fill="#000"/><rect x="609" y="0" width="1.8" height="2" fill="#000"/><rect x="612" y="0" width="1.8" height="2" fill="#000"/><rect x="616" y="0" width="1.8" height="2" fill="#000"/><rect x="620" y="0" width="1.8" height="2" fill="#000"/><rect x="624" y="0" width="1.8" height="2" fill="#000"/><rect x="627" y="0" width="1.8" height="2" fill="#000"/><rect x="631" y="0" width="1.8" height="2" fill="#000"/><rect x="635" y="0" width="1.8" height="2" fill="#000"/><rect x="639" y="0" width="1.8" height="2" fill="#000"/><rect x="642" y="0" width="1.8" height="2" fill="#000"/><rect x="646" y="0" width="1.8" height="2" fill="#000"/><rect x="650" y="0" width="1.8" height="2" fill="#000"/><rect x="654" y="0" width="1.8" height="2" fill="#000"/><rect x="657" y="0" width="1.8" height="2" fill="#000"/><rect x="661" y="0" width="1.8" height="2" fill="#000"/><rect x="665" y="0" width="1.8" height="2" fill="#000"/><rect x="669" y="0" width="1.8" height="2" fill="#000"/><rect x="672" y="0" width="1.8" height="2" fill="#000"/><rect x="676" y="0" width="1.8" height="2" fill="#000"/><rect x="680" y="0" width="1.8" height="2" fill="#000"/><rect x="684" y="0" width="1.8" height="2" fill="#000"/></svg>
<div id="t59" class="t" style="left:690.00px;top:259.00px;font-size:12.8px;color:#000000;font-family:'Liberation Sans',sans-serif;-webkit-text-stroke:0.15px #000;transform:scaleX(0.9825);">1</div>
</div>
<div style="position:absolute;left:623px;top:330px;width:250px;height:61px;background:rgba(0,0,0,0.10);filter:blur(2px)"></div>
<div style="position:absolute;left:621px;top:327px;width:250px;height:63px;background:#fff;border:1px solid #C6C6C6"></div>
<div style="position:absolute;left:625px;top:333px;width:90px;height:24px;background:#fff;border:1px solid #C6C6C6"></div>
<div style="position:absolute;left:715px;top:333px;width:46px;height:24px;background:#fff;border:1px solid #C6C6C6"></div>
<div id="t60" class="t" style="left:628.60px;top:338.00px;font-size:12px;color:#444444;font-family:'Liberation Sans',sans-serif;-webkit-text-stroke:0.2px #444444;transform:scaleX(0.9905);">Calibri (Body)</div>
<svg style="position:absolute;left:705px;top:343px;" width="6" height="4" viewBox="0 0 6 4"><path d="M0 0H5L2.5 3Z" fill="#6D6D6D"/></svg>
<div id="t61" class="t" style="left:718.70px;top:338.00px;font-size:12px;color:#444444;font-family:'Liberation Sans',sans-serif;-webkit-text-stroke:0.2px #444444;transform:scaleX(0.8421);">11</div>
<svg style="position:absolute;left:751px;top:343px;" width="6" height="4" viewBox="0 0 6 4"><path d="M0 0H5L2.5 3Z" fill="#6D6D6D"/></svg>
<div id="t62" class="t" style="left:767.00px;top:340.00px;font-size:13px;color:#444444;font-family:'Liberation Sans',sans-serif;-webkit-text-stroke:0.5px #444;transform:scaleX(1.0955);">A</div>
<svg style="position:absolute;left:775px;top:338px;" width="6" height="4" viewBox="0 0 6 4"><path d="M0 3H5L2.5 0Z" fill="#3A78C3"/></svg>
<div id="t63" class="t" style="left:790.00px;top:343.00px;font-size:10px;color:#444444;font-family:'Liberation Sans',sans-serif;-webkit-text-stroke:0.5px #444;transform:scaleX(1.1991);">A</div>
<svg style="position:absolute;left:797px;top:338px;" width="6" height="4" viewBox="0 0 6 4"><path d="M0 0H5L2.5 3Z" fill="#3A78C3"/></svg>
<svg style="position:absolute;left:808px;top:337px;" width="18" height="16" viewBox="0 0 18 16"><path d="M0.3 7.6 L4.6 5.8 L10.9 11.2 L6.9 14.9 Z" fill="#E8BE75"/><path d="M8 4.3 L12.9 9.2" stroke="#6D6D6D" stroke-width="4.4"/><path d="M13.6 1.5 L16.3 4.2" stroke="#6D6D6D" stroke-width="3.4"/></svg>
<div style="position:absolute;left:827px;top:331px;width:1px;height:55px;background:#E1E1E1"></div>
<svg style="position:absolute;left:830px;top:330px;" width="40" height="30" viewBox="0 0 40 30"><path fill-rule="evenodd" fill="#3A78C3" d="M5.9 23 L12.2 5 H15.8 L20.8 18.5 H10.6 L9.2 23 Z M11.8 15 H15.9 L13.9 8.6 Z"/><path d="M29 10 L29 15.5 L23.5 20.5 L21 18.3 Z" fill="#6D6D6D"/><path d="M21.3 19.8 Q22.6 23.8 18 25.7 L11.7 26.8 Q15 21.5 18.5 20 Z" fill="#3A78C3"/><path d="M18.6 21.3 Q20.5 21.5 20.3 23.5" stroke="#fff" stroke-width="1" fill="none"/><path d="M30 14 H35 L32.5 16.8 Z" fill="#6D6D6D"/></svg>
<div id="t64" class="t" style="left:833.30px;top:365.00px;font-size:12px;color:#555555;font-family:'Liberation Sans',sans-serif;-webkit-text-stroke:0.2px #555555;transform:scaleX(0.8872);">Styles</div>
<div id="t65" class="t" style="left:631.70px;top:366.00px;font-size:12px;color:#444444;font-family:'Liberation Sans',sans-serif;font-weight:bold;transform:scaleX(0.8649);">B</div>
<div id="t66" class="t" style="left:654.00px;top:365.00px;font-size:13px;color:#444444;font-family:'Liberation Serif',serif;font-style:italic;-webkit-text-stroke:0.2px #444444;transform:scaleX(1.6115);">I</div>
<div style="position:absolute;left:669px;top:360px;width:22px;height:24px;background:#C6C6C6"></div>
<div id="t67" class="t" style="left:675.00px;top:366.00px;font-size:12px;color:#444444;font-family:'Liberation Sans',sans-serif;font-weight:bold;transform:scaleX(0.9802);">U</div>
<div style="position:absolute;left:675px;top:378px;width:8.5px;height:1px;background:#444"></div>
<svg style="position:absolute;left:694px;top:363px;" width="17" height="18" viewBox="0 0 17 18"><text x="0" y="7" font-family="Liberation Sans" font-size="8" font-weight="bold" fill="#6D6D6D">ab</text><path d="M14.5 1.5 L16.5 3.5 L9.5 10.5 L7.5 8.5 Z" fill="#6D6D6D"/><path d="M7.5 8.5 L9.5 10.5 L7 12 L6 11 Z" fill="#6D6D6D"/><rect x="0" y="13" width="16" height="4" fill="#FFFF00"/></svg>
<svg style="position:absolute;left:716px;top:370px;" width="6" height="4" viewBox="0 0 6 4"><path d="M0 0H5L2.5 3Z" fill="#6D6D6D"/></svg>
<div id="t68" class="t" style="left:731.70px;top:365.00px;font-size:13px;color:#444444;font-family:'Liberation Sans',sans-serif;-webkit-text-stroke:0.6px #444;transform:scaleX(1.0955);">A</div>
<div style="position:absolute;left:728px;top:376px;width:16px;height:4px;background:#FF0000"></div>
<svg style="position:absolute;left:750px;top:370px;" width="6" height="4" viewBox="0 0 6 4"><path d="M0 0H5L2.5 3Z" fill="#6D6D6D"/></svg>
<svg style="position:absolute;left:762px;top:364px;" width="15" height="15" viewBox="0 0 15 15"><circle cx="2.3" cy="1.6" r="1.3" fill="#3A78C3"/><circle cx="2.3" cy="7.5" r="1.3" fill="#3A78C3"/><circle cx="2.3" cy="13.3" r="1.3" fill="#3A78C3"/><path d="M6 1.6H14 M6 7.5H14 M6 13.3H14" stroke="#6D6D6D" stroke-width="1.1"/></svg>
<svg style="position:absolute;left:784px;top:370px;" width="6" height="4" viewBox="0 0 6 4"><path d="M0 0H5L2.5 3Z" fill="#6D6D6D"/></svg>
<svg style="position:absolute;left:796px;top:364px;" width="16" height="16" viewBox="0 0 16 16"><text x="0" y="5" font-family="Liberation Sans" font-size="5" font-weight="bold" fill="#3A78C3">1</text><text x="0" y="10.5" font-family="Liberation Sans" font-size="5" font-weight="bold" fill="#3A78C3">2</text><text x="0" y="16" font-family="Liberation Sans" font-size="5" font-weight="bold" fill="#3A78C3">3</text><path d="M6 1.6H15 M6 7.5H15 M6 13.3H15" stroke="#6D6D6D" stroke-width="1.1"/></svg>
<svg style="position:absolute;left:818px;top:370px;" width="6" height="4" viewBox="0 0 6 4"><path d="M0 0H5L2.5 3Z" fill="#6D6D6D"/></svg>
<div style="position:absolute;left:623px;top:408px;width:159px;height:227px;background:rgba(0,0,0,0.10);filter:blur(2px)"></div>
<div style="position:absolute;left:621px;top:405px;width:159px;height:228px;background:#fff;border:1px solid #C6C6C6"></div>
<svg style="position:absolute;left:628px;top:411px;" width="15" height="16" viewBox="0 0 15 16"><path d="M3.5 0.5 L9.5 10.5 M11 0.5 L5 10.5" stroke="#A6A6A6" stroke-width="1.8" fill="none"/><circle cx="3.2" cy="12.3" r="2.5" fill="none" stroke="#A6A6A6" stroke-width="1.2"/><circle cx="11.2" cy="12.3" r="2.5" fill="none" stroke="#A6A6A6" stroke-width="1.2"/></svg>
<div id="t69" class="t" style="left:654.80px;top:413.00px;font-size:12px;color:#A6A6A6;font-family:'Liberation Sans',sans-serif;transform:scaleX(0.9900);">Cut</div>
<div style="position:absolute;left:669px;top:424.0px;width:4px;height:1px;background:#A6A6A6"></div>
<svg style="position:absolute;left:627px;top:436px;" width="16" height="15" viewBox="0 0 16 15"><path d="M0.5 0.5H5.5L7 2V10.5H0.5Z" fill="#fff" stroke="#A6A6A6"/><path d="M2 3.3H5 M2 5.3H5 M2 7.6H5" stroke="#A6A6A6"/><path d="M6.5 3.5H12L14.5 6V13.5H6.5Z" fill="#fff" stroke="#A6A6A6"/><path d="M8 6.5H12.5 M8 8.5H12.5 M8 10.5H12.5" stroke="#A6A6A6"/></svg>
<div id="t70" class="t" style="left:654.40px;top:437.00px;font-size:12px;color:#A6A6A6;font-family:'Liberation Sans',sans-serif;">Copy</div>
<div style="position:absolute;left:654.5px;top:448.0px;width:8px;height:1px;background:#A6A6A6"></div>
<div style="position:absolute;left:647px;top:455px;width:131px;height:22px;background:#E9E9E9"></div>
<svg style="position:absolute;left:628px;top:458px;" width="17" height="18" viewBox="0 0 17 18"><g transform="scale(1)"><path d="M0 2 H13 V14.5 H1 Q0 14.5 0 13.5Z" fill="#E5B96E"/><rect x="3" y="2" width="7" height="2.3" fill="#fff"/><rect x="3" y="2.2" width="7" height="1.2" fill="#6D6D6D"/><circle cx="6.5" cy="1.3" r="1.2" fill="#6D6D6D"/><path d="M7.5 7.5H11.5L14.5 10.5V15.5H7.5Z" fill="#fff" stroke="#6D6D6D" stroke-width="1.0"/><path d="M11.5 7.5V10.5H14.5" fill="none" stroke="#6D6D6D" stroke-width="1.0"/></g></svg>
<div id="t71" class="t" style="left:656.30px;top:460.00px;font-size:12px;color:#444444;font-family:'Liberation Sans',sans-serif;font-weight:bold;transform:scaleX(0.9387);">Paste Options:</div>
<svg style="position:absolute;left:652.5px;top:481px;" width="24" height="25" viewBox="0 0 24 25"><g transform="scale(1.45)"><path d="M0 2 H13 V14.5 H1 Q0 14.5 0 13.5Z" fill="#E5B96E"/><rect x="3" y="2" width="7" height="2.3" fill="#fff"/><rect x="3" y="2.2" width="7" height="1.2" fill="#6D6D6D"/><circle cx="6.5" cy="1.3" r="1.2" fill="#6D6D6D"/><path d="M7.5 7.5H11.5L14.5 10.5V15.5H7.5Z" fill="#fff" stroke="#6D6D6D" stroke-width="0.6896551724137931"/><path d="M11.5 7.5V10.5H14.5" fill="none" stroke="#6D6D6D" stroke-width="0.6896551724137931"/></g></svg>
<svg style="position:absolute;left:627px;top:515px;" width="17" height="15" viewBox="0 0 17 15"><path d="M0.5 0.5H7L10.5 4V13.5H0.5Z" fill="#fff" stroke="#6D6D6D"/><path d="M7 0.5V4H10.5Z" fill="#F1F1F1" stroke="#6D6D6D"/><path d="M12.3 0.2H15 L14.4 8.3H12.9Z" fill="#D24726"/><circle cx="13.65" cy="12.2" r="1.4" fill="#D24726"/></svg>
<div id="t72" class="t" style="left:654.20px;top:515.00px;font-size:12px;color:#444444;font-family:'Liberation Sans',sans-serif;-webkit-text-stroke:0.2px #444444;transform:scaleX(0.9699);">Update Field</div>
<div style="position:absolute;left:654.5px;top:526.0px;width:8px;height:1px;background:#444"></div>
<div id="t73" class="t" style="left:654.20px;top:539.00px;font-size:12px;color:#444444;font-family:'Liberation Sans',sans-serif;-webkit-text-stroke:0.2px #444444;transform:scaleX(0.9495);">Edit Field...</div>
<div style="position:absolute;left:654.5px;top:550.0px;width:7px;height:1px;background:#444"></div>
<div id="t74" class="t" style="left:654.20px;top:563.00px;font-size:12px;color:#444444;font-family:'Liberation Sans',sans-serif;-webkit-text-stroke:0.2px #444444;transform:scaleX(0.9880);">Toggle Field Codes</div>
<div style="position:absolute;left:654.5px;top:574.0px;width:7px;height:1px;background:#444"></div>
<div style="position:absolute;left:655px;top:580px;width:123px;height:1px;background:#E1E1E1"></div>
<div id="t75" class="t" style="left:630.40px;top:589.00px;font-size:12px;color:#444444;font-family:'Liberation Sans',sans-serif;-webkit-text-stroke:0.15px #444;transform:scaleX(1.1228);">A</div>
<div id="t76" class="t" style="left:654.20px;top:589.00px;font-size:12px;color:#444444;font-family:'Liberation Sans',sans-serif;-webkit-text-stroke:0.2px #444444;transform:scaleX(0.9701);">Font...</div>
<div style="position:absolute;left:654.5px;top:600.0px;width:6px;height:1px;background:#444"></div>
<svg style="position:absolute;left:628px;top:611px;" width="14" height="15" viewBox="0 0 14 15"><path d="M4 1.5H13 M0 4.5H13 M0 7.5H4.5 M0 10.5H4.5 M0 13.5H4.5" stroke="#6D6D6D"/><path d="M10 6 H7.5 Q5.5 6 5.5 8 Q5.5 10 7.5 10 H10Z" fill="#6D6D6D"/><path d="M10.5 6V14 M12.5 6V14 M7 6.5H13" stroke="#6D6D6D"/></svg>
<div id="t77" class="t" style="left:654.20px;top:613.00px;font-size:12px;color:#444444;font-family:'Liberation Sans',sans-serif;-webkit-text-stroke:0.2px #444444;transform:scaleX(0.9614);">Paragraph...</div>
<div style="position:absolute;left:654.5px;top:623.5px;width:7px;height:1px;background:#444"></div>
<div style="position:absolute;left:617px;top:507px;width:166px;height:27px;border:5px solid #E81123"></div>
<div style="position:absolute;left:1px;top:690px;width:1294px;height:22px;background:#F1F1F1;border-top:1px solid #C6C6C6"></div>
<div id="t78" class="t" style="left:8.60px;top:695.00px;font-size:12px;color:#444444;font-family:'Liberation Sans',sans-serif;-webkit-text-stroke:0.2px #444444;transform:scaleX(0.9203);">Page 1 of 1</div>
<div id="t79" class="t" style="left:85.60px;top:695.00px;font-size:12px;color:#595959;font-family:'Liberation Sans',sans-serif;transform:scaleX(0.9481);">134 words</div>
<svg style="position:absolute;left:157px;top:694px;" width="15" height="14" viewBox="0 0 15 14"><path d="M0.5 1 Q3.5 0 6.5 1.5 V12.5 Q3.5 11 0.5 12 Z M6.5 1.5 Q9.5 0 12.5 1 V5" fill="none" stroke="#6D6D6D"/><path d="M6.5 12.5 V14" stroke="#6D6D6D"/><path d="M8 8.5 L10 10.5 L14 5.5" fill="none" stroke="#6D6D6D" stroke-width="1.2"/></svg>
<div id="t80" class="t" style="left:189.40px;top:695.00px;font-size:12px;color:#595959;font-family:'Liberation Sans',sans-serif;transform:scaleX(0.9084);">German (Germany)</div>
<svg style="position:absolute;left:1000px;top:694px;" width="15" height="14" viewBox="0 0 15 14"><path d="M0.5 1.5 H6 L7 2.5 L8 1.5 H13.5 V11.5 H8 L7 12.5 L6 11.5 H0.5Z" fill="none" stroke="#6D6D6D"/><path d="M7 2.5V12.5" stroke="#6D6D6D"/><path d="M2 3.5H5.5 M2 5.5H5.5 M2 7.5H5.5 M2 9.5H5.5 M8.5 3.5H12 M8.5 5.5H12 M8.5 7.5H12 M8.5 9.5H12" stroke="#6D6D6D"/><path d="M7 12.5V13.5" stroke="#6D6D6D"/></svg>
<div style="position:absolute;left:1027px;top:691px;width:38px;height:21px;background:#C8C8C8"></div>
<svg style="position:absolute;left:1039px;top:694px;" width="15" height="14" viewBox="0 0 15 14"><path d="M0.5 0.5H13.5V12.5H0.5Z" fill="none" stroke="#6D6D6D"/><path d="M2.5 2.5H11.5 M2.5 4.5H11.5 M2.5 6.5H11.5 M2.5 8.5H11.5 M2.5 10.5H11.5" stroke="#6D6D6D"/></svg>
<svg style="position:absolute;left:1077px;top:694px;" width="16" height="15" viewBox="0 0 16 15"><path d="M7 12.5H0.5V0.5H9.5L12.5 3.5V6" fill="none" stroke="#6D6D6D"/><path d="M2 3.5H8 M2 5.5H8 M2 7.5H6 M2 9.5H6" stroke="#6D6D6D"/><circle cx="11.5" cy="10.5" r="4" fill="#6D6D6D"/><path d="M9.3 8.3 Q11.5 9.8 10.5 12.5 M12.3 7.6 Q13 10 15 10.5" stroke="#F1F1F1" fill="none" stroke-width="0.9"/></svg>
<div style="position:absolute;left:1108px;top:700px;width:6px;height:2px;background:#555"></div>
<div style="position:absolute;left:1119px;top:700px;width:99px;height:1px;background:#A6A6A6"></div>
<div style="position:absolute;left:1166px;top:695px;width:4px;height:11px;background:#555"></div>
<svg style="position:absolute;left:1222px;top:696px;" width="9" height="9" viewBox="0 0 9 9"><path d="M4.5 0V9 M0 4.5H9" stroke="#555" stroke-width="2"/></svg>
<div id="t81" class="t" style="left:1246.90px;top:695.00px;font-size:12px;color:#595959;font-family:'Liberation Sans',sans-serif;transform:scaleX(0.8669);">100 %</div>
</body></html>
